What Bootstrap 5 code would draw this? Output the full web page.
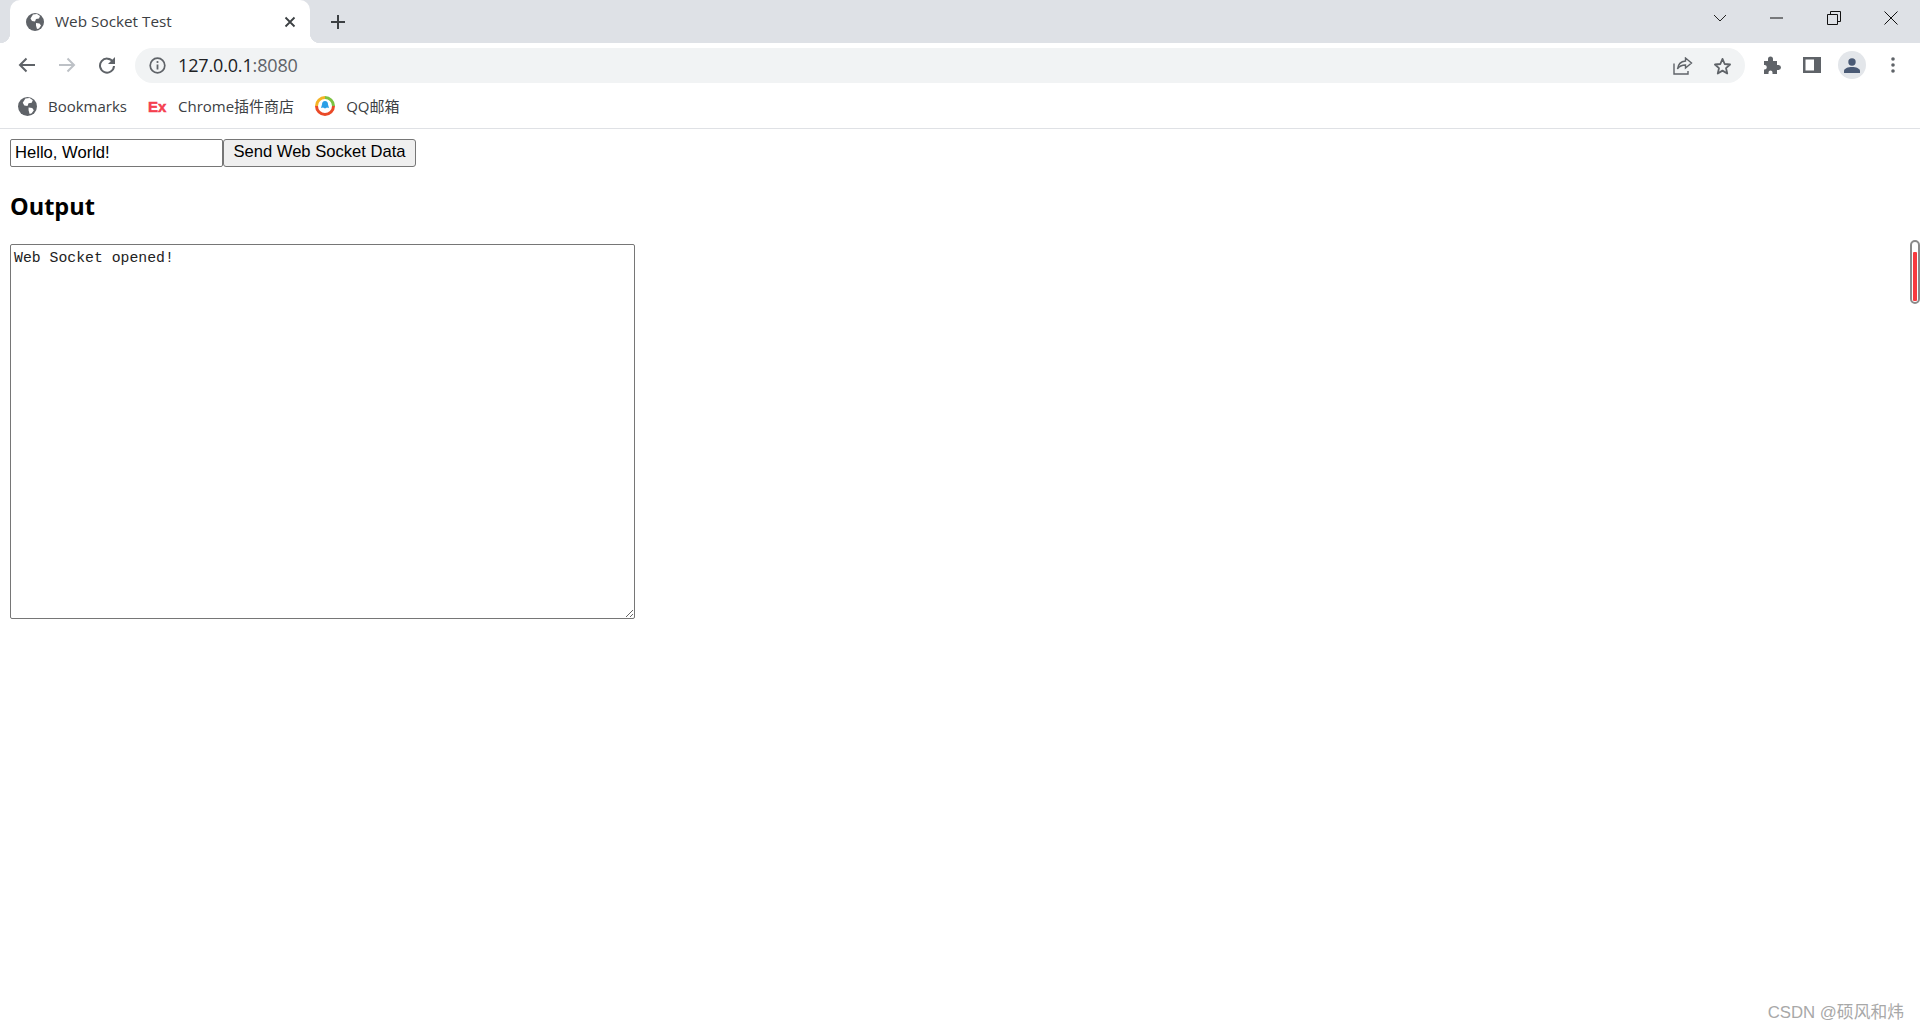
<!DOCTYPE html>
<html lang="en"><head><meta charset="utf-8"><title>Web Socket Test</title>
<link rel="stylesheet" href="https://cdn.jsdelivr.net/npm/bootstrap@5.3.0/dist/css/bootstrap.min.css">
<style>
html,body{height:100%;overflow:hidden;background:#fff}
body{font-family:"Liberation Sans",sans-serif;color:#000}
.chrome-ui{font-family:"Open Sans","Noto Sans CJK SC",sans-serif;color:#3c4043}
.tabstrip{height:43px;background:#dee1e6;padding-left:10px;padding-right:1px}
.tabcard{width:300px;height:43px;background:#fff;border-radius:10px 10px 0 0;padding:0 14px 0 16px;font-size:15.3px;position:relative}
.tabcard::before,.tabcard::after{content:"";position:absolute;bottom:0;width:10px;height:10px}
.tabcard::before{left:-10px;background:radial-gradient(circle at 0 0,#dee1e6 10px,#fff 10.5px)}
.tabcard::after{right:-10px;background:radial-gradient(circle at 100% 0,#dee1e6 10px,#fff 10.5px)}
.tabtitle{margin-left:11px}
.newtab{margin-left:20px}
.winbtn{width:57px;height:36px}
.toolbar{height:43px;padding:1px 0 0 7px}
.navbtn{width:40px;height:35px}
.omni{width:1610px;height:35px;margin-left:8px;margin-top:1px;background:#f1f3f4;border-radius:18px;padding:0 13px 0 14px}
.omni-url{font-size:18px;margin-left:12px;letter-spacing:-.15px;color:#202124;font-family:"Open Sans",sans-serif}
.omni-url span{color:#5f6368}
.star-icon{margin-left:20px}
.tb-right{margin-left:7px}
.tb-icon{width:40px;height:35px}
.tb-menu{margin-left:1px}
.avatar{width:28px;height:28px;border-radius:50%;background:#e3e6ea}
.bookmarks{height:43px;padding:0 0 2px 18px;font-size:15px;border-bottom:1px solid #dfe1e5}
.bm-item{margin-right:21px}
.bm-label{margin-left:11px}
.ex-mark{font:900 15px/1 "Liberation Sans",sans-serif;color:#f5404f;width:19px;-webkit-text-stroke:.5px #f5404f}
.pagebody{padding:10px 10px 0;position:relative;height:calc(100vh - 129px)}
.msg-input{width:213px;height:28px;font:16.6px "Liberation Sans",sans-serif;border:1px solid #767676;border-radius:2px;padding:1px 4px 2px;color:#000;display:block}
.msg-btn{height:28px;width:193px;font:16.6px "Liberation Sans",sans-serif;color:#000;background:#efefef;border:1px solid #767676;border-radius:3px;padding:0 0 2px}
.out-title{font:700 23.5px/28px "Open Sans",sans-serif;margin:25px 0 24px;color:#000}
.out-area{display:block;width:625px;height:375px;font:14.8px/16px "Liberation Mono","Noto Sans CJK SC",monospace;border:1px solid #767676;border-radius:2px;padding:5px 3px 2px;color:#222;background:#fff}
.thermo{position:absolute;right:0;top:111px;width:10px;height:64px;border:2px solid #8a8a8a;border-radius:5px;background:#fff;padding:10px 1px 1px}
.thermo-fill{display:block;height:100%;background:#f73a3f;border-radius:1px}
.mark-csdn{position:absolute;right:16px;bottom:7px;font:16.8px "Liberation Sans","Noto Sans CJK SC",sans-serif;color:#a8a8a8}
</style></head>
<body>
<div class="chrome-ui">
  <div class="tabstrip d-flex align-items-start">
    <div class="tabcard d-flex align-items-center">
      <svg width="18" height="18" viewBox="0 0 18 18"><circle cx="9" cy="9" r="9" fill="#5f6368"/><path d="M7 1.500 11 1l3 2-1 2.500-3 .5-1 2.500-3-.5-1.500-2.500zM10 10l3.500.5 1.500 2-2 3-2 .5-1-3.500z" fill="#fff"/></svg>
      <span class="tabtitle flex-grow-1">Web Socket Test</span>
      <svg width="12" height="12" viewBox="0 0 12 12"><path d="M1.500 1.500l9 9m0-9l-9 9" stroke="#3c4043" stroke-width="1.800"/></svg>
    </div>
    <svg class="newtab align-self-center" width="16" height="16" viewBox="0 0 16 16"><path d="M8 1v14M1 8h14" stroke="#3c4043" stroke-width="2"/></svg>
    <div class="d-flex ms-auto">
      <div class="winbtn d-flex align-items-center justify-content-center"><svg width="14" height="8" viewBox="0 0 14 8"><path d="M1 1l6 6 6-6" fill="none" stroke="#222" stroke-width="1"/></svg></div>
      <div class="winbtn d-flex align-items-center justify-content-center"><svg width="13" height="2" viewBox="0 0 13 2"><path d="M0 1h13" stroke="#111" stroke-width="1"/></svg></div>
      <div class="winbtn d-flex align-items-center justify-content-center"><svg width="14" height="14" viewBox="0 0 14 14"><path d="M.5 3.500h10v10H.5zM3.500 3.500v-3h10v10h-3" fill="none" stroke="#111" stroke-width="1"/></svg></div>
      <div class="winbtn d-flex align-items-center justify-content-center"><svg width="14" height="14" viewBox="0 0 14 14"><path d="M.5.5l13 13m0-13l-13 13" stroke="#111" stroke-width="1"/></svg></div>
    </div>
  </div>
  <div class="toolbar d-flex align-items-center">
    <div class="navbtn d-flex align-items-center justify-content-center"><svg width="18" height="16" viewBox="0 0 18 16"><path d="M17 8H2M8.500 1.500L2 8l6.500 6.500" fill="none" stroke="#5f6368" stroke-width="2"/></svg></div>
    <div class="navbtn d-flex align-items-center justify-content-center"><svg width="18" height="16" viewBox="0 0 18 16"><path d="M1 8h15M9.500 1.500L16 8l-6.500 6.500" fill="none" stroke="#bdc1c6" stroke-width="2"/></svg></div>
    <div class="navbtn d-flex align-items-center justify-content-center"><svg width="18" height="18" viewBox="0 0 18 18"><path d="M15 6A7 7 0 1 0 16 10" fill="none" stroke="#5f6368" stroke-width="2"/><path d="M17 1v7h-7z" fill="#5f6368"/></svg></div>
    <div class="omni d-flex align-items-center">
      <svg width="17" height="17" viewBox="0 0 17 17"><circle cx="8.500" cy="8.500" r="7.300" fill="none" stroke="#5f6368" stroke-width="1.700"/><path d="M8.500 7.500v5" stroke="#5f6368" stroke-width="1.800"/><circle cx="8.500" cy="5" r="1.100" fill="#5f6368"/></svg>
      <span class="omni-url">127.0.0.1<span>:8080</span></span>
      <svg class="ms-auto" width="20" height="18" viewBox="0 0 20 18"><path d="M12.500 1l6 5-6 5V8C8 8 6 9.500 4.500 12 5 7.500 8 4.500 12.500 4zM1 6.500V17h14v-3" fill="none" stroke="#5f6368" stroke-width="1.400"/></svg>
      <svg class="star-icon" width="19" height="18" viewBox="0 0 20 19"><path d="M10 2l2.300 5.400 5.700.5-4.300 3.800 1.300 5.700-5-3-5 3 1.300-5.700L2 7.900l5.700-.5z" fill="none" stroke="#5f6368" stroke-width="1.900" stroke-linejoin="round"/></svg>
    </div>
    <div class="d-flex align-items-center tb-right">
      <div class="tb-icon d-flex align-items-center justify-content-center"><svg width="18" height="18" viewBox="0 0 18 18"><path d="M1 5h4V3a2.300 2.300 0 0 1 5 0v2h4v4h1.500a2.300 2.300 0 0 1 0 5H14v4H9.500v-1.500a2 2 0 0 0-4 0V18H1v-4.500h1a2.300 2.300 0 0 0 0-4.500H1z" fill="#5f6368"/></svg></div>
      <div class="tb-icon d-flex align-items-center justify-content-center"><svg width="18" height="16" viewBox="0 0 18 16"><path d="M0 0h18v16H0z" fill="#5f6368"/><path d="M2.500 2.500H11v11H2.500z" fill="#fff"/></svg></div>
      <div class="tb-icon d-flex align-items-center justify-content-center"><div class="avatar d-flex align-items-center justify-content-center"><svg width="16" height="15" viewBox="0 0 16 15"><circle cx="8" cy="4" r="3.700" fill="#4a5a75"/><path d="M0 15v-2c0-2.500 4-4 8-4s8 1.500 8 4v2z" fill="#4a5a75"/></svg></div></div>
      <div class="tb-icon tb-menu d-flex align-items-center justify-content-center"><svg width="6" height="18" viewBox="0 0 6 18"><circle cx="3" cy="3" r="1.800" fill="#5f6368"/><circle cx="3" cy="9" r="1.800" fill="#5f6368"/><circle cx="3" cy="15" r="1.800" fill="#5f6368"/></svg></div>
    </div>
  </div>
  <div class="bookmarks d-flex align-items-center">
    <div class="bm-item d-flex align-items-center">
      <svg width="19" height="19" viewBox="0 0 18 18"><circle cx="9" cy="9" r="9" fill="#5f6368"/><path d="M7 1.500 11 1l3 2-1 2.500-3 .5-1 2.500-3-.5-1.500-2.500zM10 10l3.500.5 1.500 2-2 3-2 .5-1-3.500z" fill="#fff"/></svg>
      <span class="bm-label">Bookmarks</span>
    </div>
    <div class="bm-item d-flex align-items-center">
      <span class="ex-mark">Ex</span>
      <span class="bm-label">Chrome插件商店</span>
    </div>
    <div class="bm-item d-flex align-items-center">
      <svg width="20" height="20" viewBox="0 0 20 20"><path d="M10 1.500A8.500 8.500 0 0 0 1.500 10" fill="none" stroke="#f5b324" stroke-width="3"/><path d="M10 1.500A8.500 8.500 0 0 1 18.500 10" fill="none" stroke="#7cc242" stroke-width="3"/><path d="M18.500 10A8.500 8.500 0 0 1 1.500 10" fill="none" stroke="#ea4a28" stroke-width="3"/><path d="M10 5c2 0 3 1.500 3 3.500l1 3.500-2-.5-2 1-2-1-2 .5 1-3.500C7 6.500 8 5 10 5z" fill="#2b9fe6"/></svg>
      <span class="bm-label">QQ邮箱</span>
    </div>
  </div>
</div>
<main class="pagebody">
  <form class="d-flex" onsubmit="return false">
    <input class="msg-input" type="text" value="Hello, World!">
    <button class="msg-btn" type="button">Send Web Socket Data</button>
  </form>
  <h3 class="out-title">Output</h3>
  <textarea class="out-area">Web Socket opened!</textarea>
  <div class="thermo"><span class="thermo-fill"></span></div>
  <div class="mark-csdn">CSDN @硕风和炜</div>
</main>
<script src="https://cdn.jsdelivr.net/npm/bootstrap@5.3.0/dist/js/bootstrap.bundle.min.js"></script>
</body></html>
